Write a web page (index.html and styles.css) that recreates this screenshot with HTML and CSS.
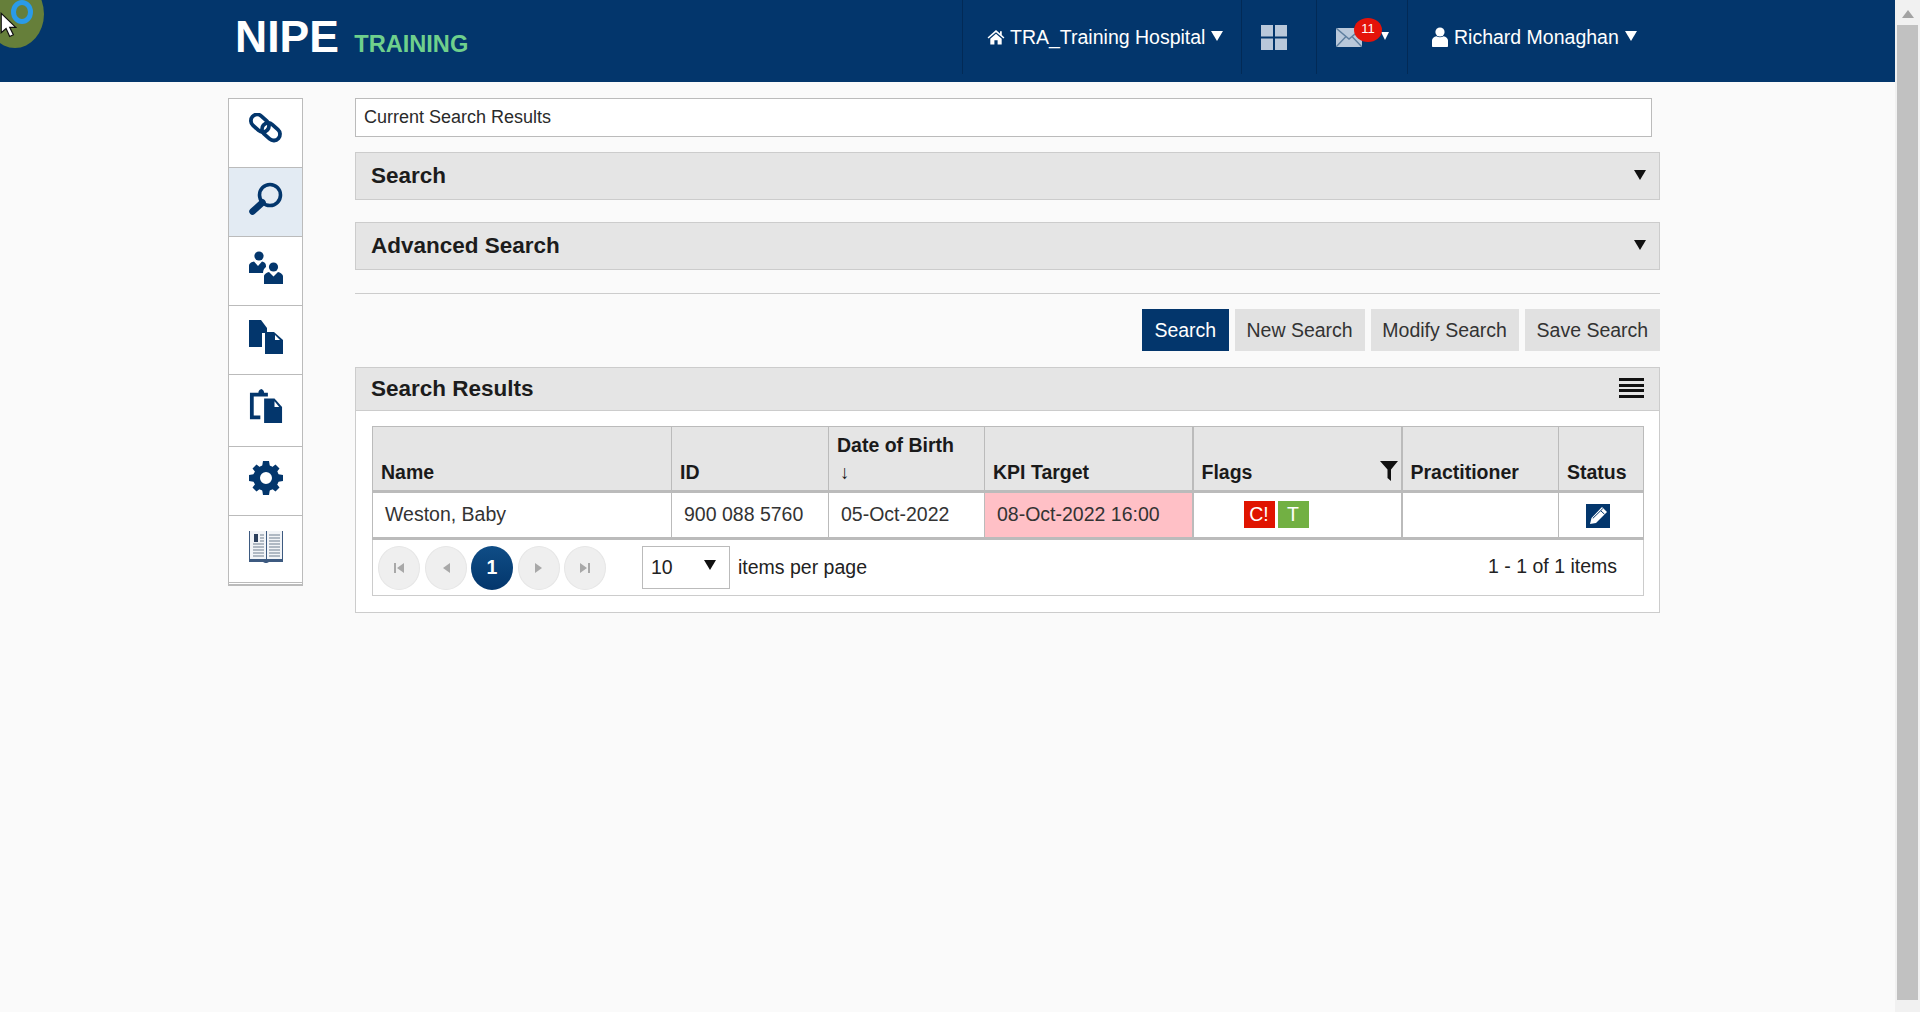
FILE: index.html
```html
<!DOCTYPE html>
<html>

<head>
    <meta charset="utf-8">
    <title>NIPE Training</title>
    <link rel="stylesheet" href="styles.css">
</head>

<body>
    <div class="page">
        <div class="header">
            <div class="logo">NIPE <span>TRAINING</span></div>
            <div class="nav">
                <div class="nav-item hospital">
                    <svg class="home" viewBox="0 0 20 18"><path d="M10 1 L14.5 5 V2.5 H16.5 V6.8 L19.5 9.5 L18.4 10.8 L10 3.6 L1.6 10.8 L.5 9.5 Z M3.6 11 L10 5.4 L16.4 11 V17.5 H11.8 V12.6 H8.2 V17.5 H3.6 Z" /></svg>
                    <span>TRA_Training Hospital</span>
                    <i class="caret"></i>
                </div>
                <div class="nav-item tiles">
                    <svg viewBox="0 0 26 25"><path d="M0 0H12V11.5H0Z M14 0H26V11.5H14Z M0 13.5H12V25H0Z M14 13.5H26V25H14Z" /></svg>
                </div>
                <div class="nav-item mail">
                    <svg viewBox="0 0 26 19"><path d="M0 0H26V19H0Z" fill="#b9c8da" /><path d="M0 0 L13 11 L26 0 M0 19 L10 8.5 M26 19 L16 8.5" fill="none" stroke="#5f7f9f" stroke-width="1.4" /></svg>
                    <span class="count">11</span>
                    <i class="caret small"></i>
                </div>
                <div class="nav-item user">
                    <svg class="person" viewBox="0 0 16 20"><circle cx="8" cy="5" r="4.6" /><path d="M0 19 V13.5 C0 11 2 9.8 4.4 9.2 C6.5 10.6 9.5 10.6 11.6 9.2 C14 9.8 16 11 16 13.5 V19 C16 19.6 15.6 20 15 20 H1 C.4 20 0 19.6 0 19 Z" /></svg>
                    <span>Richard Monaghan</span>
                    <i class="caret"></i>
                </div>
            </div>
        </div>

        <div class="content">
            <div class="sidebar">
                <a class="side-item">
                    <svg viewBox="0 0 34 34"><g fill="none" stroke="#03366c" stroke-width="3.8"><rect x="1" y="4" width="20" height="12.5" rx="6.2" transform="rotate(42 11 10.2)" /><rect x="12" y="12.5" width="20" height="12.5" rx="6.2" transform="rotate(42 22 18.7)" /></g></svg>
                </a>
                <a class="side-item active">
                    <svg viewBox="0 0 34 34"><circle cx="21" cy="13" r="10.5" fill="none" stroke="#03366c" stroke-width="3.6" /><path d="M13.5 20.5 L3.5 29.5" stroke="#03366c" stroke-width="6.5" stroke-linecap="round" /></svg>
                </a>
                <a class="side-item">
                    <svg viewBox="0 0 34 34" class="blue"><circle cx="10" cy="5" r="4.6" /><path d="M0 22 V15 C0 12 3 11 5 10.5 L9 15 L13 10.5 C15 11 17 12 17 15 V16 C15.5 17 14 19 14 22 Z" /><circle cx="24.5" cy="16" r="4.6" /><path d="M15 33 V25.5 C15 23 18 21.6 20 21 L24.5 25.5 L29 21 C31 21.6 34 23 34 25.5 V33 Z" /></svg>
                </a>
                <a class="side-item">
                    <svg viewBox="0 0 34 34" class="blue"><path d="M0 0H12L18 8V13H13V27H0Z" /><path d="M16 12H25L34 20V34H16Z" /><path d="M26 15 L31 20 H26 Z" fill="#fff" /></svg>
                </a>
                <a class="side-item tall">
                    <svg viewBox="0 0 34 36" class="blue"><path d="M0 4H9C9 1 12 0 12 0 C12 0 15 1 15 4H19V8H4V28H11V32H0Z" /><path d="M15 10H26L34 19V36H15Z" /><path d="M26 13 L31 19 H26 Z" fill="#fff" /></svg>
                </a>
                <a class="side-item">
                    <svg viewBox="0 0 34 34" class="blue"><circle cx="17" cy="17" r="9.5" fill="none" stroke="#03366c" stroke-width="7" /><path d="M14 0H20L21 6H13Z M14 34H20L21 28H13Z M0 14V20L6 21V13Z M34 14V20L28 21V13Z M3.5 7.5 L7.5 3.5 L12 7 L7 12Z M30.5 7.5 L26.5 3.5 L22 7 L27 12Z M3.5 26.5 L7.5 30.5 L12 27 L7 22Z M30.5 26.5 L26.5 30.5 L22 27 L27 22Z" /></svg>
                </a>
                <a class="side-item last">
                    <svg viewBox="0 0 34 32"><path d="M0 0H34V31H20L18 32H16L14 31H0Z" fill="#3d5a80" /><path d="M1 0H17V28H1Z M18 0H33V28H18Z" fill="#f2f4f7" /><path d="M5 3H9V11H5Z" fill="#2b3f5c" /><path d="M11 4H15M11 7H15M11 10H15M4 13H15M4 16H15M4 19H15M4 22H15M4 25H15M20 4H31M20 7H31M20 10H31M20 13H31M20 16H31M20 19H31M20 22H31M20 25H31" stroke="#9aa5b3" stroke-width="1.4" /></svg>
                </a>
            </div>

            <div class="main">
                <input class="current" value="Current Search Results">
                <div class="panel-bar">Search <i class="caret dark"></i></div>
                <div class="panel-bar">Advanced Search <i class="caret dark"></i></div>
                <div class="rule"></div>
                <div class="buttons">
                    <button class="primary">Search</button>
                    <button>New Search</button>
                    <button>Modify Search</button>
                    <button>Save Search</button>
                </div>

                <div class="results">
                    <div class="results-title">
                        Search Results
                        <div class="menu"><b></b><b></b><b></b><b></b></div>
                    </div>
                    <div class="results-body">
                        <table>
                            <colgroup>
                                <col class="c-name">
                                <col class="c-id">
                                <col class="c-dob">
                                <col class="c-kpi">
                                <col class="c-flags">
                                <col class="c-prac">
                                <col class="c-status">
                            </colgroup>
                            <thead>
                                <tr>
                                    <th>Name</th>
                                    <th>ID</th>
                                    <th>Date of Birth<br><span class="sort">&#8595;</span></th>
                                    <th>KPI Target</th>
                                    <th class="flags-head">Flags
                                        <svg class="funnel" viewBox="0 0 18 20"><path d="M0 0H18L11 8.5V20L7.5 17V8.5Z" /></svg>
                                    </th>
                                    <th>Practitioner</th>
                                    <th>Status</th>
                                </tr>
                            </thead>
                            <tbody>
                                <tr>
                                    <td class="name">Weston, Baby</td>
                                    <td>900 088 5760</td>
                                    <td>05-Oct-2022</td>
                                    <td class="late">08-Oct-2022 16:00</td>
                                    <td class="flags"><span class="flag red">C!</span><span class="flag green">T</span></td>
                                    <td></td>
                                    <td class="status">
                                        <svg class="edit" viewBox="0 0 24 24"><path d="M0 0H24V24H0Z" fill="#03366c" /><path d="M4 20 L5.5 14 L16 3 L21 8 L10 19 Z" fill="#fff" /><path d="M6.8 14.4 L16.8 4.6 M15 7 L18.5 10.2" stroke="#03366c" stroke-width="1" fill="none" /></svg>
                                    </td>
                                </tr>
                            </tbody>
                        </table>
                        <div class="pager">
                            <div class="pages">
                                <span class="page-btn"><svg viewBox="0 0 12 12"><path d="M1 1H3V11H1Z M11 1V11L4 6Z" /></svg></span>
                                <span class="page-btn"><svg viewBox="0 0 12 12"><path d="M10 1V11L3 6Z" /></svg></span>
                                <span class="page-btn current-page">1</span>
                                <span class="page-btn"><svg viewBox="0 0 12 12"><path d="M2 1V11L9 6Z" /></svg></span>
                                <span class="page-btn"><svg viewBox="0 0 12 12"><path d="M1 1V11L8 6Z M9 1H11V11H9Z" /></svg></span>
                            </div>
                            <div class="size-select">10 <i class="caret dark"></i></div>
                            <div class="per-page">items per page</div>
                            <div class="range">1 - 1 of 1 items</div>
                        </div>
                    </div>
                </div>
            </div>
        </div>

        <div class="busy"><div class="ring"></div></div>
        <svg class="cursor" viewBox="0 0 14 22"><path d="M1 1V17L5 13.5L8 20L11 18.6L8 12.5H13Z" fill="#fff" stroke="#111" stroke-width="1" /></svg>
    </div>

    <div class="scrollbar">
        <div class="arrow"></div>
        <div class="thumb"></div>
    </div>
</body>

</html>
```

FILE: styles.css
```css
* {
    box-sizing: border-box;
}

html,
body {
    height: 100%;
}

body {
    margin: 0;
    display: flex;
    overflow: hidden;
    background: #fafafa;
    color: #222;
    font-family: "Liberation Sans", Arial, sans-serif;
    font-size: 19.5px;
}

.page {
    flex: 1;
    position: relative;
    min-width: 0;
}

.caret {
    display: inline-block;
    flex: none;
    width: 0;
    height: 0;
    border-left: 6px solid transparent;
    border-right: 6px solid transparent;
    border-top: 10px solid #fff;
}

.caret.small {
    border-left-width: 4px;
    border-right-width: 4px;
    border-top-width: 8px;
}

.caret.dark {
    border-top-color: #111;
}

/* header */
.header {
    height: 82px;
    background: #03366c;
    display: flex;
    justify-content: space-between;
    padding-left: 235px;
}

.logo {
    color: #fff;
    font-weight: bold;
    font-size: 44.5px;
    line-height: 74px;
}

.logo span {
    color: #6fd08c;
    font-size: 23.6px;
    margin-left: 3px;
}

.nav {
    display: flex;
    height: 74px;
    margin-right: 245px;
    color: #fff;
}

.nav-item {
    display: flex;
    align-items: center;
    border-left: 1px solid #022a56;
    padding-left: 24px;
    white-space: nowrap;
}

.hospital {
    width: 279px;
}

.home {
    flex: none;
    width: 18px;
    height: 16px;
    fill: #fff;
    margin-right: 5px;
}

.hospital .caret,
.user .caret {
    margin-left: 6px;
    margin-top: -2px;
}

.tiles {
    width: 75px;
    padding-left: 19px;
}

.tiles svg {
    width: 26px;
    height: 25px;
    fill: #b9c8da;
}

.mail {
    width: 91px;
    position: relative;
    padding-left: 19px;
}

.mail svg {
    flex: none;
    width: 26px;
    height: 19px;
}

.mail .caret {
    margin-left: 19px;
    margin-top: -2px;
}

.count {
    position: absolute;
    left: 37px;
    top: 18px;
    width: 28px;
    height: 24px;
    border-radius: 50%;
    background: #e4130a;
    color: #fff;
    font-size: 13px;
    line-height: 22px;
    text-align: center;
}

.user {
    width: 243px;
}

.person {
    flex: none;
    width: 16px;
    height: 20px;
    fill: #fff;
    margin-right: 6px;
}

/* body layout */
.content {
    display: flex;
    margin-left: 228px;
    width: 1431px;
    padding-top: 16px;
}

.sidebar {
    width: 75px;
    flex: none;
    height: 488px;
    border: 1px solid #bbb;
    border-bottom: 2px solid #bbb;
    background: #fff;
    display: flex;
    flex-direction: column;
}

.side-item {
    height: 69px;
    flex: none;
    border-bottom: 1px solid #bbb;
    display: flex;
    justify-content: center;
    padding-top: 14px;
}

.side-item.tall {
    height: 72px;
}

.side-item.last {
    height: 67px;
}

.side-item.active {
    background: #e3ebf3;
}

.side-item svg {
    width: 34px;
    height: 34px;
}

.blue {
    fill: #03366c;
}

.main {
    flex: 1;
    margin-left: 52px;
}

.current {
    display: block;
    width: 1297px;
    height: 39px;
    border: 1px solid #bbb;
    padding: 0 8px;
    background: #fff;
    font: 18px "Liberation Sans", Arial, sans-serif;
    color: #2a2a2a;
}

.panel-bar {
    height: 48px;
    margin-top: 15px;
    background: #e5e5e5;
    border: 1px solid #ccc;
    display: flex;
    align-items: center;
    justify-content: space-between;
    padding: 0 13px 0 15px;
    font-size: 22.5px;
    font-weight: bold;
    color: #1c1c1c;
}

.panel-bar + .panel-bar {
    margin-top: 22px;
}

.panel-bar .caret {
    margin-top: -3px;
}

.rule {
    margin-top: 23px;
    border-top: 1px solid #ccc;
}

.buttons {
    display: flex;
    justify-content: flex-end;
    gap: 6px;
    margin-top: 15px;
}

button {
    height: 42px;
    border: 0;
    padding: 0 11.8px;
    background: #e1e1e1;
    color: #333;
    font: 19.5px "Liberation Sans", Arial, sans-serif;
}

button.primary {
    padding: 0 12.5px;
    background: #03366c;
    color: #fff;
}

/* results */
.results {
    margin-top: 16px;
    border: 1px solid #ccc;
    background: #fff;
    height: 246px;
}

.results-title {
    height: 43px;
    background: #e5e5e5;
    border-bottom: 1px solid #ccc;
    display: flex;
    align-items: center;
    justify-content: space-between;
    padding: 0 15px;
    font-size: 22.5px;
    font-weight: bold;
    color: #1c1c1c;
}

.menu {
    margin-top: -2px;
}

.menu b {
    display: block;
    width: 25px;
    height: 3px;
    background: #111;
    margin: 2.4px 0;
}

.results-body {
    margin: 15px 15px 0 16px;
    width: 1272px;
    border: 1px solid #ccc;
    border-top: 0;
    height: 170px;
}

table {
    width: 1271px;
    table-layout: fixed;
    border-collapse: collapse;
    margin-left: -1px;
}

.c-name { width: 299px; }
.c-id { width: 157px; }
.c-dob { width: 156px; }
.c-kpi { width: 208px; }
.c-flags { width: 209px; }
.c-prac { width: 157px; }
.c-status { width: 85px; }

th,
td {
    border: 1px solid #bbb;
    padding: 0 8px;
}

th {
    background: #e5e5e5;
    height: 65px;
    border-bottom: 3px solid #bbb;
    text-align: left;
    vertical-align: bottom;
    padding-bottom: 4px;
    line-height: 27px;
    color: #1a1a1a;
}

td {
    height: 47px;
    border-bottom: 3px solid #bbb;
    padding-left: 12px;
    padding-bottom: 2px;
    color: #333;
}

th:nth-child(5),
td:nth-child(5) {
    border-left-width: 2px;
    border-right-width: 2px;
}

.sort {
    font-size: 19px;
    padding-left: 3px;
}

.flags-head {
    position: relative;
}

.funnel {
    position: absolute;
    right: 3px;
    bottom: 9px;
    width: 18px;
    height: 20px;
    fill: #111;
}

.late {
    background: #ffc0c6;
}

.flags {
    padding-left: 50px;
    white-space: nowrap;
}

.flag {
    display: inline-block;
    width: 31px;
    height: 27px;
    line-height: 27px;
    text-align: center;
    color: #fff;
    margin-right: 3px;
    vertical-align: middle;
}

.red {
    background: #e01400;
}

.green {
    background: #72b043;
}

.status {
    text-align: center;
    padding: 0 6px 0 0;
}

.edit {
    width: 24px;
    height: 24px;
    display: block;
    margin: 2px auto 0;
}

/* pager */
.pager {
    display: flex;
    align-items: center;
    height: 55px;
    padding-left: 5px;
}

.pages {
    display: flex;
    gap: 4.5px;
}

.page-btn {
    width: 42px;
    height: 44px;
    border-radius: 50%;
    background: #efefef;
    border: 1px solid #e6e6e6;
    display: flex;
    align-items: center;
    justify-content: center;
}

.page-btn svg {
    width: 12px;
    height: 12px;
    fill: #a8a8a8;
}

.current-page {
    background: linear-gradient(#0f4d86, #03366c);
    border: 0;
    color: #fff;
    font-weight: bold;
}

.size-select {
    width: 88px;
    height: 43px;
    margin-left: 36px;
    border: 1px solid #bbb;
    background: #fff;
    display: flex;
    align-items: center;
    justify-content: space-between;
    padding: 0 13px 0 8px;
}

.size-select .caret {
    margin-top: -6px;
}

.per-page {
    margin-left: 8px;
}

.range {
    margin-left: auto;
    margin-right: 26px;
    margin-top: -3px;
}

/* busy cursor overlay from the recording */
.busy {
    position: absolute;
    left: -14px;
    top: -20px;
    width: 58px;
    height: 68px;
    border-radius: 50%;
    background: #667f3a;
}

.ring {
    position: absolute;
    left: 25px;
    top: 20px;
    width: 22px;
    height: 24px;
    border-radius: 50%;
    border: 5px solid #2a9be8;
}

.cursor {
    position: absolute;
    left: 0;
    top: 12px;
    width: 17px;
    height: 27px;
}

/* scrollbar */
.scrollbar {
    width: 25px;
    height: 100%;
    flex: none;
    background: #f1f1f1;
    padding: 0 2px;
}

.arrow {
    width: 0;
    height: 0;
    margin: 10px auto 7px;
    border-left: 6px solid transparent;
    border-right: 6px solid transparent;
    border-bottom: 8px solid #a3a3a3;
}

.thumb {
    height: 975px;
    background: #c1c1c1;
}
```
